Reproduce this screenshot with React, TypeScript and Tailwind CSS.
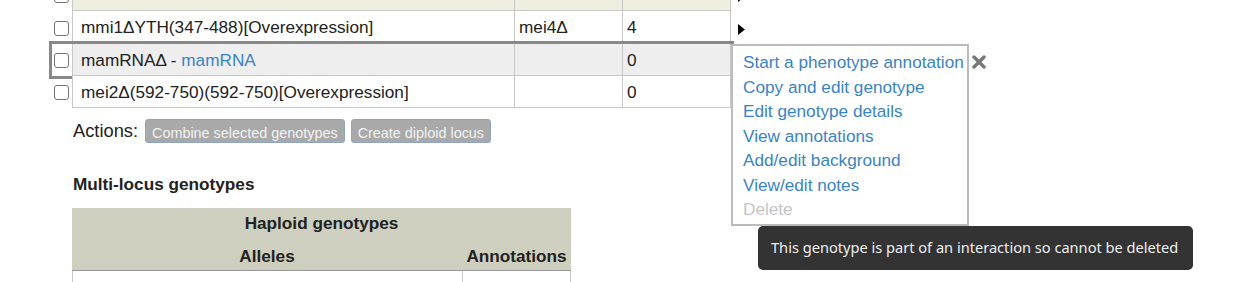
import React from "react";

type Row = {
  allele: React.ReactNode;
  expr: string;
  count: string;
  selected?: boolean;
  header?: boolean;
};

const rows: Row[] = [
  { allele: "", expr: "", count: "", header: true },
  { allele: "mmi1ΔYTH(347-488)[Overexpression]", expr: "mei4Δ", count: "4" },
  {
    allele: (
      <span>
        mamRNAΔ - <span className="text-[#3a83c4]">mamRNA</span>
      </span>
    ),
    expr: "",
    count: "0",
    selected: true,
  },
  { allele: "mei2Δ(592-750)(592-750)[Overexpression]", expr: "", count: "0" },
];

const menuItems = [
  "Start a phenotype annotation",
  "Copy and edit genotype",
  "Edit genotype details",
  "View annotations",
  "Add/edit background",
  "View/edit notes",
];

function Checkbox() {
  return <div className="h-[15px] w-[15px] rounded-[3px] border border-[#767676] bg-white" />;
}

function Arrow() {
  return (
    <svg width="7" height="11" viewBox="0 0 7 11" className="mt-[4px]">
      <polygon points="0,0 7,5.5 0,11" fill="#000" />
    </svg>
  );
}

function GenotypeRow({ row, height }: { row: Row; height: string }) {
  const cellBg = row.header ? "bg-[#efefdf]" : row.selected ? "bg-[#eeeeee]" : "bg-white";
  return (
    <div className={`flex ${height}`}>
      <div className={`flex w-[679px] ${row.selected ? "outline-[3px] outline-[#888]" : ""}`}>
        <div className="flex w-[20px] items-center pl-[2px] pt-[1px]">
          <Checkbox />
        </div>
        <div className={`flex w-[442px] items-center border-b border-l border-[#c8c8c8] pl-[8px] pt-[2px] ${cellBg}`}>
          {row.allele}
        </div>
        <div className={`flex w-[108px] items-center border-b border-l border-[#c8c8c8] pl-[4px] pt-[2px] ${cellBg}`}>
          {row.expr}
        </div>
        <div className={`flex w-[109px] items-center border-x border-b border-[#c8c8c8] pl-[4px] pt-[2px] ${cellBg}`}>
          {row.count}
        </div>
      </div>
      <div className="flex w-[20px] items-center pl-[7px]">
        <Arrow />
      </div>
    </div>
  );
}

export default function App() {
  const heights = ["h-[33px]", "h-[33px]", "h-[32px]", "h-[32px]"];

  return (
    <div className="relative h-[282px] w-[1238px] overflow-hidden bg-white font-['Liberation_Sans',Arial,sans-serif] text-[17.2px] text-[#222]">
      {/* Single-locus genotype table */}
      <div className="mt-[-22px] pl-[52px]">
        {rows.map((row, i) => (
          <GenotypeRow key={i} row={row} height={heights[i]} />
        ))}
      </div>

      {/* Actions */}
      <div className="ml-[73px] mt-[11px] flex h-[24px] items-center">
        <span className="mr-[7px] text-[18.3px]">Actions:</span>
        <div className="flex gap-[6px]">
          <button className="h-[24px] rounded-[3px] border border-[#8ea5bd] bg-[#a9a9a9] px-[6px] pt-[3px] text-[14.4px] text-[#f2f2f2]">
            Combine selected genotypes
          </button>
          <button className="h-[24px] rounded-[3px] border border-[#8ea5bd] bg-[#a9a9a9] px-[6px] pt-[3px] text-[14.4px] text-[#f2f2f2]">
            Create diploid locus
          </button>
        </div>
      </div>

      {/* Multi-locus genotypes */}
      <h2 className="ml-[73px] mt-[31px] text-[17.2px] font-bold leading-[20px]">Multi-locus genotypes</h2>
      <div className="ml-[72px] mt-[14px] w-[499px]">
        <div className="bg-[#cfcfbf] font-bold">
          <div className="flex h-[31px] items-center justify-center pt-[1px]">Haploid genotypes</div>
          <div className="flex h-[31px] pt-[4px]">
            <div className="flex w-[390px] items-center justify-center">Alleles</div>
            <div className="flex w-[109px] items-center justify-center">Annotations</div>
          </div>
        </div>
        <div className="flex h-[30px] border-t border-[#999]">
          <div className="w-[390px] border-l border-[#c8c8c8]" />
          <div className="w-[109px] border-x border-[#c8c8c8]" />
        </div>
      </div>

      {/* Genotype action menu */}
      <div className="absolute left-[731px] top-[44px] w-[238px] border-2 border-[#bbbbbb] bg-white pb-[2px] pl-[10px] pt-[4px] leading-[24.5px]">
        {menuItems.map((item) => (
          <div key={item} className="text-[#3a83c4]">
            {item}
          </div>
        ))}
        <div className="text-[#c4c4c4]">Delete</div>
      </div>
      <svg className="absolute left-[972px] top-[55px]" width="14" height="14" viewBox="0 0 14 14">
        <path d="M2 2 L12 12 M12 2 L2 12" stroke="#777" strokeWidth="3.4" strokeLinecap="round" />
      </svg>

      {/* Tooltip */}
      <div className="absolute left-[758px] top-[226px] flex h-[44px] w-[435px] items-center whitespace-nowrap rounded-[5px] bg-[#333] px-[13px] font-['Noto_Sans',sans-serif] text-[14.6px] text-[#eeeeee]">
        This genotype is part of an interaction so cannot be deleted
      </div>
    </div>
  );
}
